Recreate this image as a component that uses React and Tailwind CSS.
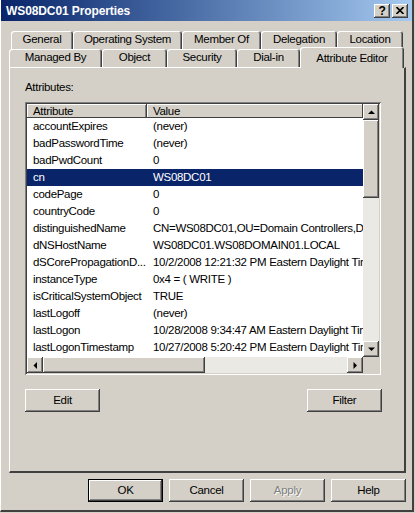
import React from 'react';

const raised = 'shadow-[inset_-1px_-1px_#404040,inset_1px_1px_#ffffff,inset_-2px_-2px_#808080,inset_2px_2px_#d4d0c8]';
const sunken = 'shadow-[inset_1px_1px_#808080,inset_-1px_-1px_#ffffff,inset_2px_2px_#404040,inset_-2px_-2px_#d4d0c8]';

const ROWS = [
  ['accountExpires', '(never)'],
  ['badPasswordTime', '(never)'],
  ['badPwdCount', '0'],
  ['cn', 'WS08DC01'],
  ['codePage', '0'],
  ['countryCode', '0'],
  ['distinguishedName', 'CN=WS08DC01,OU=Domain Controllers,DC=WS08DOMAIN01,DC=LOCAL'],
  ['dNSHostName', 'WS08DC01.WS08DOMAIN01.LOCAL'],
  ['dSCorePropagationD...', '10/2/2008 12:21:32 PM Eastern Daylight Time'],
  ['instanceType', '0x4 = ( WRITE )'],
  ['isCriticalSystemObject', 'TRUE'],
  ['lastLogoff', '(never)'],
  ['lastLogon', '10/28/2008 9:34:47 AM Eastern Daylight Time'],
  ['lastLogonTimestamp', '10/27/2008 5:20:42 PM Eastern Daylight Time'],
  ['localPolicyFlags', '0'],
];

const ROW1 = [
  ['General', 'w-[62px]'],
  ['Operating System', 'w-[109px]'],
  ['Member Of', 'w-[79px]'],
  ['Delegation', 'w-[76px]'],
  ['Location', 'w-[66px]'],
];

const ROW2 = [
  ['Managed By', 'w-[93px]'],
  ['Object', 'w-[65px]'],
  ['Security', 'w-[70px]'],
  ['Dial-in', 'w-[63px]'],
];

const Arrow = ({ dir }) => {
  const pts = {
    up: '0,4 7,4 3.5,0.5',
    down: '0,0.5 7,0.5 3.5,4',
    left: '4,0 4,7 0.5,3.5',
    right: '0.5,0 0.5,7 4,3.5',
  }[dir];
  const vert = dir === 'up' || dir === 'down';
  return (
    <svg width={vert ? 7 : 5} height={vert ? 5 : 7} viewBox={vert ? '0 0 7 5' : '0 0 5 7'}>
      <polygon points={pts} fill="#000" />
    </svg>
  );
};

const ScrollBtn = ({ dir }) => (
  <div className={`w-[16px] h-[16px] bg-[#d4d0c8] flex items-center justify-center ${raised}`}>
    <Arrow dir={dir} />
  </div>
);

const Tab = ({ label, w }) => (
  <div className={`${w} h-[18px] bg-[#d4d0c8] rounded-t-[3px] flex items-center justify-center shadow-[inset_1px_1px_#ffffff,inset_-1px_0_#404040,inset_-2px_0_#808080]`}>
    {label}
  </div>
);

const Btn = ({ children, className = '' }) => (
  <div className={`w-[75px] h-[23px] bg-[#d4d0c8] flex items-center justify-center ${raised} ${className}`}>
    {children}
  </div>
);

export default function App() {
  return (
    <div className="w-[415px] h-[513px] bg-[#d4d0c8] overflow-hidden text-[11.5px] text-black tracking-[-0.3px]" style={{ fontFamily: '"Liberation Sans", Arial, sans-serif' }}>
      <div className="w-[414px] h-[512px] border-r-2 border-b-2 border-r-[#404040] border-b-[#404040] border-l border-l-[#ffffff] flex flex-col">
        {/* title bar */}
        <div className="h-[21px] flex items-center justify-between pl-[5px] pr-[4px] bg-gradient-to-r from-[#0a246a] to-[#a6caf0]">
          <span className="text-white font-bold text-[12px] tracking-[-0.1px]">WS08DC01 Properties</span>
          <div className="flex gap-[2px]">
            <div className={`w-[16px] h-[14px] bg-[#d4d0c8] flex items-center justify-center font-bold text-[12px] leading-none ${raised}`}>?</div>
            <div className={`w-[16px] h-[14px] bg-[#d4d0c8] flex items-center justify-center ${raised}`}>
              <svg width="8" height="7" viewBox="0 0 8 7">
                <path d="M0.5 0 L7.5 7 M7.5 0 L0.5 7" stroke="#000" strokeWidth="1.6" />
              </svg>
            </div>
          </div>
        </div>

        {/* tabs */}
        <div className="mt-[10px] pl-[10px] flex">
          {ROW1.map(([l, w]) => <Tab key={l} label={l} w={w} />)}
        </div>
        <div className="pl-[8px] h-[18px] flex items-end">
          {ROW2.map(([l, w]) => <Tab key={l} label={l} w={w} />)}
          <div className="relative z-10 w-[104px] h-[21px] -mb-[1px] bg-[#d4d0c8] rounded-t-[3px] flex items-start justify-center pt-[3px] shadow-[inset_1px_1px_#ffffff,inset_-1px_0_#404040,inset_-2px_0_#808080]">
            Attribute Editor
          </div>
        </div>

        {/* panel */}
        <div className="ml-[8px] w-[397px] h-[406px] border-l border-t border-[#ffffff] border-r-2 border-b-2 border-r-[#404040] border-b-[#404040] pl-[15px] pt-[13px] flex flex-col">
          <div className="leading-[13px]">Attributes:</div>
          <div className={`mt-[8px] w-[356px] h-[273px] bg-white p-[2px] ${sunken}`}>
            <div className="w-full h-full grid grid-cols-[1fr_16px] grid-rows-[1fr_16px]">
              <div className="overflow-hidden">
                <div className="flex h-[14px] leading-[14px]">
                  <div className="w-[120px] shrink-0 bg-[#d4d0c8] pl-[6px] shadow-[inset_-1px_-1px_#404040,inset_1px_1px_#ffffff,inset_-2px_0_#808080]">Attribute</div>
                  <div className="flex-1 bg-[#d4d0c8] pl-[6px] shadow-[inset_-1px_-1px_#404040,inset_1px_1px_#ffffff]">Value</div>
                </div>
                {ROWS.map(([a, v]) => {
                  const sel = a === 'cn';
                  return (
                    <div key={a} className={`flex h-[17px] leading-[17px] whitespace-nowrap ${sel ? 'bg-[#0a246a] text-white' : ''}`}>
                      <div className="w-[120px] shrink-0 pl-[6px] overflow-hidden">{a}</div>
                      <div className="pl-[6px]">{v}</div>
                    </div>
                  );
                })}
              </div>
              {/* vertical scrollbar */}
              <div className="flex flex-col bg-[#ebe9e4]">
                <ScrollBtn dir="up" />
                <div className={`h-[78px] bg-[#d4d0c8] ${raised}`} />
                <div className="flex-1" />
                <ScrollBtn dir="down" />
              </div>
              {/* horizontal scrollbar */}
              <div className="flex bg-[#ebe9e4]">
                <ScrollBtn dir="left" />
                <div className={`w-[162px] bg-[#d4d0c8] ${raised}`} />
                <div className="flex-1" />
                <ScrollBtn dir="right" />
              </div>
              <div className="bg-[#d4d0c8]" />
            </div>
          </div>
          <div className="mt-[14px] w-[357px] flex justify-between">
            <Btn>Edit</Btn>
            <Btn>Filter</Btn>
          </div>
        </div>

        {/* dialog buttons */}
        <div className="mt-[6px] pl-[87px] flex gap-[6px]">
          <Btn className="border border-black">OK</Btn>
          <Btn>Cancel</Btn>
          <Btn className="text-[#808080] [text-shadow:1px_1px_0_#ffffff]">Apply</Btn>
          <Btn>Help</Btn>
        </div>
      </div>
    </div>
  );
}
